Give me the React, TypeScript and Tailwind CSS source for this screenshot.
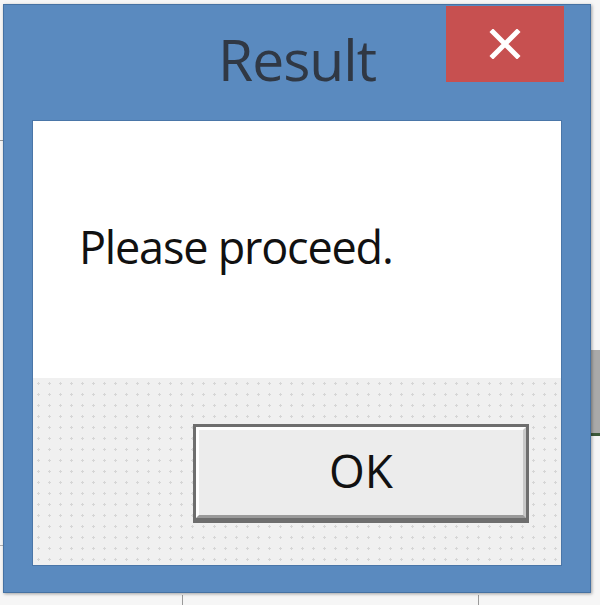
export default function App() {
  return (
    <div className="relative w-[600px] h-[605px] overflow-hidden bg-[#f6f6f6] pt-[4px] pl-[3px]">
      {/* spreadsheet grid peeking out behind the dialog */}
      <div className="absolute left-0 top-[140px] w-[6px] h-px bg-[#9a9a9a]" />
      <div className="absolute left-0 top-[545px] w-[6px] h-px bg-[#b0b0b0]" />
      <div className="absolute right-0 top-[350px] w-[10px] h-[86px] bg-[#a9a9a9] border-b-[3px] border-[#3d5a3a]" />
      <div className="absolute left-[182px] top-[595px] w-px h-[10px] bg-[#9a9a9a]" />
      <div className="absolute left-[478px] top-[595px] w-px h-[10px] bg-[#9a9a9a]" />

      {/* dialog window */}
      <div className="relative w-[588px] h-[589px] flex flex-col bg-[#5a8abf] border border-[#4672a3] shadow-[1px_1px_3px_rgba(0,0,0,0.35)]">
        {/* title bar */}
        <div className="relative h-[115px] shrink-0 flex items-start justify-center">
          <span
            className="mt-[26px] text-[57px] leading-none text-[#303844] tracking-[-1px]"
            style={{ fontFamily: '"Open Sans", "Noto Sans", sans-serif' }}
          >
            Result
          </span>
          <button className="absolute right-[26px] top-[1px] w-[118px] h-[76px] bg-[#c75050] flex items-center justify-center">
            <svg width="32" height="30" viewBox="0 0 32 30">
              <path d="M4 3 L28 27 M28 3 L4 27" stroke="#ffffff" strokeWidth="5" strokeLinecap="square" />
            </svg>
          </button>
        </div>

        {/* client area */}
        <div className="mx-[28px] mb-[26px] flex-1 flex flex-col border border-[#4a76a8]">
          <div className="h-[257px] bg-white pl-[46px] pt-[103px]">
            <p
              className="text-[45px] leading-none text-[#111] tracking-[-1.2px]"
              style={{ fontFamily: '"Open Sans", "Noto Sans", sans-serif' }}
            >
              Please proceed.
            </p>
          </div>
          <div className="flex-1 bg-[#f0f0f0] bg-[radial-gradient(circle,#d6d6d6_1px,transparent_1.4px)] bg-[length:11px_11px] flex justify-end pt-[46px] pr-[32px]">
            <button className="w-[336px] h-[99px] border-[3px] border-[#6e6e6e] border-b-[5px] bg-[#ececec]">
              <div className="w-full h-full border-[3px] border-t-white border-l-white border-r-[#c8c8c8] border-b-[#9a9a9a] flex items-center justify-center">
                <span
                  className="text-[46px] leading-none text-[#111] mt-[-6px]"
                  style={{ fontFamily: '"Open Sans", "Noto Sans", sans-serif' }}
                >
                  OK
                </span>
              </div>
            </button>
          </div>
        </div>
      </div>
    </div>
  );
}
